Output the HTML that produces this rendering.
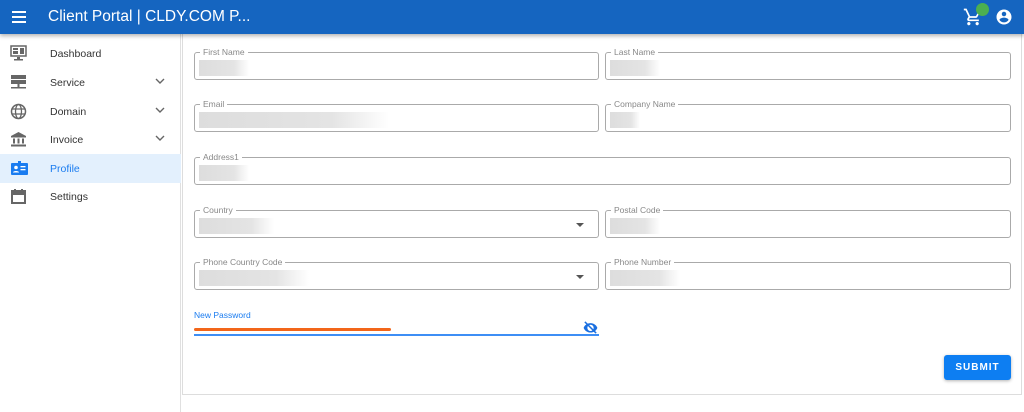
<!DOCTYPE html>
<html><head><meta charset="utf-8"><style>
*{box-sizing:border-box;margin:0;padding:0}
body{width:1024px;height:412px;overflow:hidden;background:#fff;font-family:"Liberation Sans",Arial,sans-serif;position:relative}
.hdr{position:absolute;left:0;top:0;width:1024px;height:34px;background:#1565c0;box-shadow:0 2px 4px rgba(0,0,0,.3);z-index:2}
.hdr .t{position:absolute;left:48px;top:8px;color:#fff;font-size:15.5px}
.side{position:absolute;left:0;top:34px;width:181px;height:378px;border-right:1px solid #e0e0e0}
.item{position:absolute;left:0;width:181px;height:29px;font-size:10.5px;color:#333}
.item span{position:absolute;left:50px;top:9px}
.item svg{position:absolute;left:10px;top:6px}
.item .chev{left:155px;top:10px}
.card{position:absolute;left:182px;top:34px;width:840px;height:361px;border:1px solid #ddd;border-top:none;background:#fff}
.f{position:absolute;height:28px;border:1px solid #aaa;border-radius:3px}
.f label{position:absolute;left:5px;top:-6px;background:#fff;padding:0 3px;font-size:8.5px;color:#888;line-height:10px}
.blur{position:absolute;left:4px;top:7px;height:16px;background:linear-gradient(90deg,#ddd,#e4e4e4 70%,#fff)}
.arr{position:absolute;right:14px;top:12px;width:0;height:0;border-left:4px solid transparent;border-right:4px solid transparent;border-top:4px solid #555}
.btn{position:absolute;left:944px;top:355px;width:67px;height:25px;background:#0d7ef2;border-radius:3px;color:#fff;font-size:10px;font-weight:bold;letter-spacing:1px;text-align:center;line-height:25px;box-shadow:0 1px 3px rgba(0,0,0,.3)}
</style></head><body>
<div class="hdr">
<svg style="position:absolute;left:12px;top:11px" width="14" height="12"><rect y="0" width="14" height="2" fill="#fff"/><rect y="5" width="14" height="2" fill="#fff"/><rect y="10" width="14" height="2" fill="#fff"/></svg>
<div class="t">Client Portal | CLDY.COM P...</div>
<svg style="position:absolute;left:963px;top:7px" width="20" height="20" viewBox="0 0 24 24"><path fill="#fff" d="M7 18c-1.1 0-2 .9-2 2s.9 2 2 2 2-.9 2-2-.9-2-2-2zM1 2v2h2l3.6 7.6-1.4 2.4C5.1 14.3 5 14.6 5 15c0 1.1.9 2 2 2h12v-2H7.4c-.1 0-.2-.1-.2-.2v-.1l.9-1.7h7.4c.8 0 1.4-.4 1.7-1l3.6-6.5-1.7-1-3.6 6.5H8.5L4.3 2H1zm16 16c-1.1 0-2 .9-2 2s.9 2 2 2 2-.9 2-2-.9-2-2-2z"/></svg>
<div style="position:absolute;left:976px;top:3px;width:13px;height:13px;border-radius:50%;background:#4caf50"></div>
<svg style="position:absolute;left:995px;top:8px" width="18" height="18" viewBox="0 0 24 24"><path fill="#fff" d="M12 2C6.5 2 2 6.5 2 12s4.5 10 10 10 10-4.5 10-10S17.5 2 12 2zm0 3c1.7 0 3 1.3 3 3s-1.3 3-3 3-3-1.3-3-3 1.3-3 3-3zm0 14.2c-2.5 0-4.7-1.3-6-3.2 0-2 4-3.1 6-3.1s6 1.1 6 3.1c-1.3 1.9-3.5 3.2-6 3.2z"/></svg>
</div>
<div class="side">
<div class="item" style="top:5px"><svg width="17" height="17" viewBox="0 0 17 17"><rect x="1" y="1" width="15" height="10" fill="none" stroke="#666" stroke-width="1.5"/><rect x="3" y="3" width="5" height="2" fill="#666"/><rect x="10" y="3" width="4" height="6" fill="#666"/><rect x="3" y="6" width="5" height="3" fill="#666"/><rect x="7" y="12" width="3" height="2" fill="#666"/><rect x="4" y="14" width="9" height="1.5" fill="#666"/></svg><span>Dashboard</span></div>
<div class="item" style="top:34px"><svg width="17" height="17" viewBox="0 0 17 17"><rect x="1" y="1" width="15" height="4" fill="#666"/><rect x="1" y="6" width="15" height="4" fill="#666"/><rect x="7.5" y="10" width="2" height="4" fill="#666"/><rect x="1" y="13" width="15" height="1.5" fill="#666"/></svg><span>Service</span><svg class="chev" width="10" height="7"><path d="M1 1l4 4 4-4" stroke="#666" stroke-width="1.4" fill="none"/></svg></div>
<div class="item" style="top:63px"><svg width="17" height="17" viewBox="0 0 17 17"><circle cx="8.5" cy="8.5" r="7" fill="none" stroke="#666" stroke-width="1.5"/><ellipse cx="8.5" cy="8.5" rx="3" ry="7" fill="none" stroke="#666" stroke-width="1.3"/><path d="M1.5 6h14M1.5 11h14" stroke="#666" stroke-width="1.3"/></svg><span>Domain</span><svg class="chev" width="10" height="7"><path d="M1 1l4 4 4-4" stroke="#666" stroke-width="1.4" fill="none"/></svg></div>
<div class="item" style="top:91px"><svg width="17" height="17" viewBox="0 0 17 17"><path d="M8.5 1L1 5v1.5h15V5z" fill="#666"/><rect x="3" y="7.5" width="2" height="5" fill="#666"/><rect x="7.5" y="7.5" width="2" height="5" fill="#666"/><rect x="12" y="7.5" width="2" height="5" fill="#666"/><rect x="1" y="13.5" width="15" height="2" fill="#666"/></svg><span>Invoice</span><svg class="chev" width="10" height="7"><path d="M1 1l4 4 4-4" stroke="#666" stroke-width="1.4" fill="none"/></svg></div>
<div class="item" style="top:120px;background:#e3f0fd;color:#1a7cf0"><svg width="19" height="17" viewBox="0 0 19 17"><rect x="1" y="3" width="17" height="12" rx="1" fill="#1a7cf0"/><circle cx="6" cy="7.5" r="1.8" fill="#fff"/><path d="M3 12.5c0-2 6-2 6 0z" fill="#fff"/><rect x="10.5" y="6" width="5" height="1.3" fill="#fff"/><rect x="10.5" y="9" width="5" height="1.3" fill="#fff"/><rect x="8" y="1" width="3" height="2" fill="#1a7cf0"/></svg><span>Profile</span></div>
<div class="item" style="top:148px"><svg width="17" height="17" viewBox="0 0 17 17"><rect x="2" y="3" width="13" height="12" fill="none" stroke="#666" stroke-width="2"/><rect x="2" y="3" width="13" height="4" fill="#666"/><rect x="4" y="1" width="2" height="3" fill="#666"/><rect x="11" y="1" width="2" height="3" fill="#666"/></svg><span>Settings</span></div>
</div>
<div class="card"></div>
<div class="f" style="left:194px;top:52px;width:405px"><label>First Name</label><div class="blur" style="width:50px"></div></div>
<div class="f" style="left:605px;top:52px;width:406px"><label>Last Name</label><div class="blur" style="width:50px"></div></div>
<div class="f" style="left:194px;top:104px;width:405px"><label>Email</label><div class="blur" style="width:190px"></div></div>
<div class="f" style="left:605px;top:104px;width:406px"><label>Company Name</label><div class="blur" style="width:30px"></div></div>
<div class="f" style="left:194px;top:157px;width:817px"><label>Address1</label><div class="blur" style="width:50px"></div></div>
<div class="f" style="left:194px;top:210px;width:405px"><label>Country</label><div class="blur" style="width:75px"></div><div class="arr"></div></div>
<div class="f" style="left:605px;top:210px;width:406px"><label>Postal Code</label><div class="blur" style="width:50px"></div></div>
<div class="f" style="left:194px;top:262px;width:405px"><label>Phone Country Code</label><div class="blur" style="width:110px"></div><div class="arr"></div></div>
<div class="f" style="left:605px;top:262px;width:406px"><label>Phone Number</label><div class="blur" style="width:70px"></div></div>
<div style="position:absolute;left:194px;top:310px;font-size:8.5px;color:#1a7cf0">New Password</div>
<div style="position:absolute;left:194px;top:328px;width:197px;height:3px;background:#f2661a;border-radius:2px"></div>
<div style="position:absolute;left:194px;top:334px;width:405px;height:2px;background:#3d8ef5"></div>
<svg style="position:absolute;left:583px;top:321px" width="15" height="13" viewBox="0 0 24 20"><path fill="#1a6fe0" d="M12 3C7 3 2.7 6.1 1 10.5 2.7 14.9 7 18 12 18s9.3-3.1 11-7.5C21.3 6.1 17 3 12 3zm0 12.5c-2.8 0-5-2.2-5-5s2.2-5 5-5 5 2.2 5 5-2.2 5-5 5z"/><path d="M3 1l18 18" stroke="#1a6fe0" stroke-width="2.5"/></svg>
<div class="btn">SUBMIT</div>
</body></html>
